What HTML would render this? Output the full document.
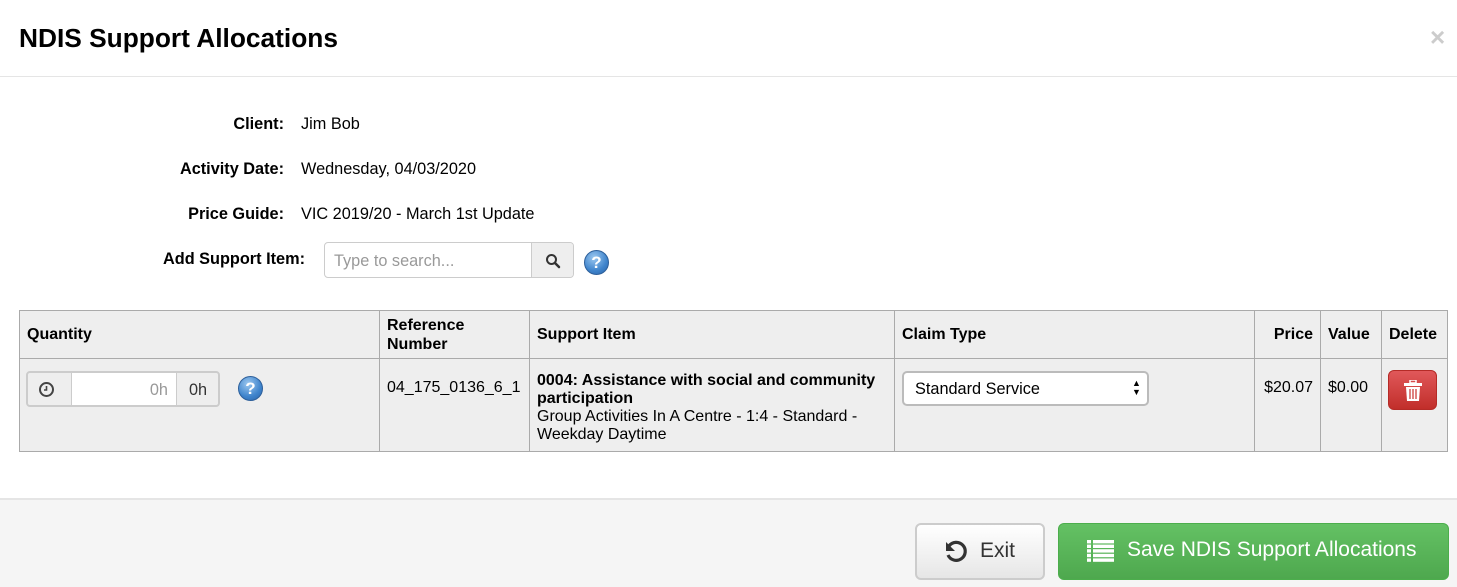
<!DOCTYPE html>
<html><head><style>
*{box-sizing:border-box;margin:0;padding:0}
body{width:1457px;height:587px;background:#fff;font-family:"Liberation Sans",Arial,sans-serif;color:#000;position:relative;overflow:hidden}
.a{position:absolute}
.t{font-size:16.3px;white-space:nowrap}
.lb{font-weight:bold;text-align:right;width:200px}
.help{position:absolute;width:25px;height:25px;border-radius:50%;background:radial-gradient(circle at 40% 30%,#9cc8f0,#3f84cc 60%,#2a63a8);border:1px solid #2d5f9a;color:#fff;font-weight:bold;font-size:17px;text-align:center;line-height:23px}
table{position:absolute;left:19px;top:310px;border-collapse:collapse;background:#eee;font-size:16px}
td,th{border:1px solid #aaa;vertical-align:top;text-align:left;padding:7px 7px}
th{height:48px;vertical-align:middle;line-height:19px;padding:4px 7px}
td{height:93px;line-height:18px}
</style></head><body>
<div class="a" style="left:19px;top:23px;font-size:26.3px;font-weight:bold">NDIS Support Allocations</div>
<div class="a" style="left:1430px;top:22px;font-size:26px;color:#ccc;font-weight:bold">×</div>
<div class="a" style="left:0;top:76px;width:1457px;height:1px;background:#e5e5e5"></div>

<div class="a t lb" style="left:84px;top:115px">Client:</div><div class="a t" style="left:301px;top:115px">Jim Bob</div>
<div class="a t lb" style="left:84px;top:160px">Activity Date:</div><div class="a t" style="left:301px;top:160px">Wednesday, 04/03/2020</div>
<div class="a t lb" style="left:84px;top:205px">Price Guide:</div><div class="a t" style="left:301px;top:205px">VIC 2019/20 - March 1st Update</div>
<div class="a t lb" style="left:105px;top:250px">Add Support Item:</div>
<div class="a" style="left:324px;top:242px;width:250px;height:36px;border:1px solid #ccc;border-radius:4px;overflow:hidden">
 <div class="a t" style="left:9px;top:9px;color:#999">Type to search...</div>
 <div class="a" style="left:206px;top:0;width:42px;height:34px;background:#eee;border-left:1px solid #ccc">
  <svg class="a" style="left:13px;top:10px" width="16" height="16" viewBox="0 0 16 16"><circle cx="6.5" cy="6.5" r="4.5" fill="none" stroke="#333" stroke-width="2"/><path d="M10 10l4 4" stroke="#333" stroke-width="2.5" stroke-linecap="round"/></svg>
 </div>
</div>
<div class="help" style="left:584px;top:250px">?</div>

<table>
<tr><th style="width:360px">Quantity</th><th style="width:150px">Reference<br>Number</th><th style="width:365px">Support Item</th><th style="width:360px">Claim Type</th><th style="width:66px;text-align:right">Price</th><th style="width:61px">Value</th><th style="width:66px">Delete</th></tr>
<tr><td></td><td style="padding-top:20px">04_175_0136_6_1</td><td style="padding-top:13px"><b>0004: Assistance with social and community participation</b><br>Group Activities In A Centre - 1:4 - Standard - Weekday Daytime</td><td></td><td style="padding-top:20px;text-align:right">$20.07</td><td style="padding-top:20px">$0.00</td><td></td></tr>
</table>

<div class="a" style="left:26px;top:371px;width:194px;height:36px;border:2px solid #ccc;border-radius:4px;background:#eee;overflow:hidden">
 <svg class="a" style="left:10px;top:8px" width="17" height="17" viewBox="0 0 17 17"><circle cx="8.5" cy="8.5" r="6.5" fill="none" stroke="#444" stroke-width="2"/><path d="M8.5 5v4H6" fill="none" stroke="#444" stroke-width="1.6"/></svg>
 <div class="a" style="left:43px;top:0;width:106px;height:32px;background:#fff;border-left:1px solid #ccc;border-right:1px solid #ccc"><div class="a t" style="right:8px;top:8px;color:#999">0h</div></div>
 <div class="a t" style="left:161px;top:8px;color:#333">0h</div>
</div>
<div class="help" style="left:238px;top:376px">?</div>

<div class="a" style="left:902px;top:371px;width:247px;height:35px;border:2px solid #bbb;border-radius:5px;background:#fff">
 <div class="a t" style="left:11px;top:7px">Standard Service</div>
 <div class="a" style="left:228px;top:6px;font-size:9px;line-height:9px">▲<br>▼</div>
</div>
<div class="a" style="left:1388px;top:370px;width:49px;height:40px;border-radius:6px;background:linear-gradient(#e0585a,#c12e2a);border:1px solid #b52b27">
 <svg class="a" style="left:14px;top:9px" width="20" height="21" viewBox="0 0 20 21"><rect x="7" y="0" width="6" height="3" fill="none" stroke="#fff" stroke-width="1.5"/><rect x="1" y="3" width="18" height="3" fill="#fff"/><path d="M3 7h14l-1 14H4z" fill="#fff"/><path d="M7 9v10M10 9v10M13 9v10" stroke="#c9302c" stroke-width="1.2"/></svg>
</div>

<div class="a" style="left:0;top:498px;width:1457px;height:89px;background:#f5f5f5;border-top:2px solid #e5e5e5"></div>
<div class="a" style="left:915px;top:523px;width:130px;height:57px;border:2px solid #ccc;border-radius:6px;background:linear-gradient(#fff,#e6e6e6)">
 <svg class="a" style="left:27px;top:15px" width="24" height="24" viewBox="0 0 24 24"><path d="M5 6A9 9 0 1 1 4 15" fill="none" stroke="#333" stroke-width="3.2"/><path d="M2 2v9h9z" fill="#333"/></svg>
 <div class="a" style="left:63px;top:14px;font-size:21px;color:#333">Exit</div>
</div>
<div class="a" style="left:1058px;top:523px;width:391px;height:57px;border:1px solid #4cae4c;border-radius:6px;background:linear-gradient(#64c164,#4ea84e)">
 <svg class="a" style="left:28px;top:16px" width="27" height="22" viewBox="0 0 27 22"><g fill="#fff"><rect x="0" y="0" width="4" height="3.4"/><rect x="6" y="0" width="21" height="3.4"/><rect x="0" y="4.6" width="4" height="3.4"/><rect x="6" y="4.6" width="21" height="3.4"/><rect x="0" y="9.2" width="4" height="3.4"/><rect x="6" y="9.2" width="21" height="3.4"/><rect x="0" y="13.8" width="4" height="3.4"/><rect x="6" y="13.8" width="21" height="3.4"/><rect x="0" y="18.4" width="4" height="3.4"/><rect x="6" y="18.4" width="21" height="3.4"/></g></svg>
 <div class="a" style="left:68px;top:14px;font-size:21px;color:#fff;white-space:nowrap">Save NDIS Support Allocations</div>
</div>
</body></html>
